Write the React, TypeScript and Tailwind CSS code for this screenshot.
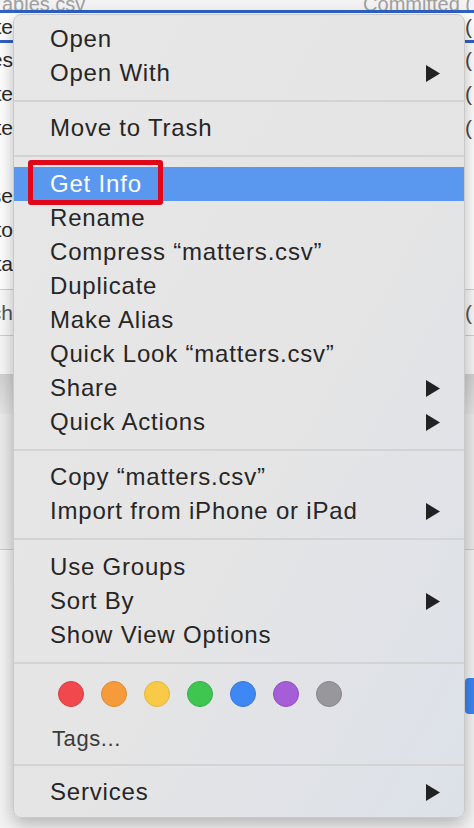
import React from "react";

const FONT = { fontFamily: '"Liberation Sans", Arial, sans-serif' };

function Arrow() {
  return (
    <svg width="14" height="17" viewBox="0 0 14 17" className="shrink-0">
      <polygon points="0,0 14,8.5 0,17" fill="#222222" />
    </svg>
  );
}

function Item({ label, arrow }: { label: string; arrow?: boolean }) {
  return (
    <div className="flex h-[34px] items-center justify-between pl-[36px] pr-[24px]">
      <span className="whitespace-nowrap text-[24px] tracking-[0.8px] text-[#262626]">{label}</span>
      {arrow && <Arrow />}
    </div>
  );
}

function Sep({ h }: { h: string }) {
  return (
    <div className={`flex items-center ${h}`}>
      <div className="h-[2px] w-full bg-[#d3d3d3]" />
    </div>
  );
}

function BgRow({ left, right, cls }: { left?: string; right?: string; cls?: string }) {
  return (
    <div className={`flex h-[34px] items-center justify-between ${cls ?? ""}`}>
      <div className="flex w-[13px] justify-end overflow-hidden">
        <span className="whitespace-nowrap text-[21px] text-[#2a2a2a]">{left ?? ""}</span>
      </div>
      <div className="w-[9px] overflow-hidden">
        <span className="whitespace-nowrap text-[21px] text-[#4a4a4a]">{right ?? ""}</span>
      </div>
    </div>
  );
}

const COLORS = [
  { bg: "#f0484d", bd: "#d93b40" },
  { bg: "#f59b3c", bd: "#df8a30" },
  { bg: "#f8ca48", bd: "#e3b53d" },
  { bg: "#3fc651", bd: "#33ae44" },
  { bg: "#3f88f4", bd: "#3377dc" },
  { bg: "#a55ed7", bd: "#904dc0" },
  { bg: "#98979c", bd: "#86858a" },
];

export default function App() {
  return (
    <div className="relative h-[828px] w-[474px] overflow-hidden bg-[#f7f7f7]" style={FONT}>
      {/* background finder window */}
      <div className="flex flex-col">
        <div className="flex h-[10px] items-end justify-between overflow-hidden bg-[#f3f3f3] px-[2px]">
          <span className="-mb-[9px] text-[20px] text-[#a0a0a0]">ables.csv</span>
          <span className="-mb-[9px] text-[20px] text-[#a0a0a0]">Committed (</span>
        </div>
        <div className="flex h-[33px] items-center justify-between border-y-[3px] border-[#2f62c6] bg-white">
          <div className="flex w-[13px] justify-end overflow-hidden">
            <span className="whitespace-nowrap text-[21px] text-[#2a2a2a]">Update</span>
          </div>
          <div className="w-[9px] overflow-hidden">
            <span className="whitespace-nowrap text-[21px] text-[#4a4a4a]">(</span>
          </div>
        </div>
        <BgRow left="Notes" right="(" cls="bg-white" />
        <BgRow left="Update" right="(" cls="bg-white" />
        <BgRow left="Update" right="(" cls="bg-white" />
        <BgRow cls="bg-white" />
        <BgRow left="Base" cls="bg-white" />
        <BgRow left="Auto" cls="bg-white" />
        <BgRow left="Data" cls="bg-white" />
        <div className="h-[8px] bg-white" />
        <div className="flex h-[47px] items-center justify-between border-y border-[#cfcfcf] bg-[#fafafa]">
          <div className="flex w-[13px] justify-end overflow-hidden">
            <span className="whitespace-nowrap text-[21px] text-[#555]">Search</span>
          </div>
          <div className="w-[9px] overflow-hidden">
            <span className="whitespace-nowrap text-[21px] text-[#555]">(</span>
          </div>
        </div>
        <div className="h-[38px] bg-[#f7f7f7]" />
        <div className="h-[40px] bg-gradient-to-b from-[#d2d2d2] to-[#e6e6e6]" />
        <div className="h-[136px] border-b border-[#cdcdcd] bg-[#ececec]" />
        <div className="flex h-[280px] flex-col items-end bg-[#f4f4f4] pt-[128px]">
          <div className="h-[36px] w-[9px] rounded-l-[4px] bg-[#3c86f2]" />
        </div>
      </div>

      {/* context menu */}
      <div className="absolute left-[13px] top-[14px] w-[452px] rounded-[8px] border border-[#c9c9c9] bg-gradient-to-br from-[#e8e7e7] via-[#e6e5e5] to-[#dce1e9] pb-[8px] pt-[7px] shadow-[0_6px_18px_rgba(0,0,0,0.28)]">
        <Item label="Open" />
        <Item label="Open With" arrow />
        <Sep h="h-[21px]" />
        <Item label="Move to Trash" />
        <Sep h="h-[22px]" />
        <div className="relative flex h-[34px] items-center bg-[#5a97ef] pl-[36px] pr-[24px]">
          <span className="whitespace-nowrap text-[24px] tracking-[0.8px] text-white">Get Info</span>
          <div className="absolute left-[14px] top-[-7px] h-[45px] w-[135px] rounded-[3px] border-[5px] border-[#e2061b]" />
        </div>
        <Item label="Rename" />
        <Item label="Compress “matters.csv”" />
        <Item label="Duplicate" />
        <Item label="Make Alias" />
        <Item label="Quick Look “matters.csv”" />
        <Item label="Share" arrow />
        <Item label="Quick Actions" arrow />
        <Sep h="h-[21px]" />
        <Item label="Copy “matters.csv”" />
        <Item label="Import from iPhone or iPad" arrow />
        <Sep h="h-[22px]" />
        <Item label="Use Groups" />
        <Item label="Sort By" arrow />
        <Item label="Show View Options" />
        <Sep h="h-[21px]" />
        <div className="flex gap-[17px] pl-[44px] pt-[8px]">
          {COLORS.map((c, i) => (
            <div
              key={i}
              className="h-[26px] w-[26px] rounded-full border"
              style={{ backgroundColor: c.bg, borderColor: c.bd }}
            />
          ))}
        </div>
        <div className="mt-[14px] flex h-[34px] items-center pl-[38px]">
          <span className="text-[22px] tracking-[0.6px] text-[#3a3a3a]">Tags...</span>
        </div>
        <Sep h="h-[20px]" />
        <Item label="Services" arrow />
      </div>
    </div>
  );
}
